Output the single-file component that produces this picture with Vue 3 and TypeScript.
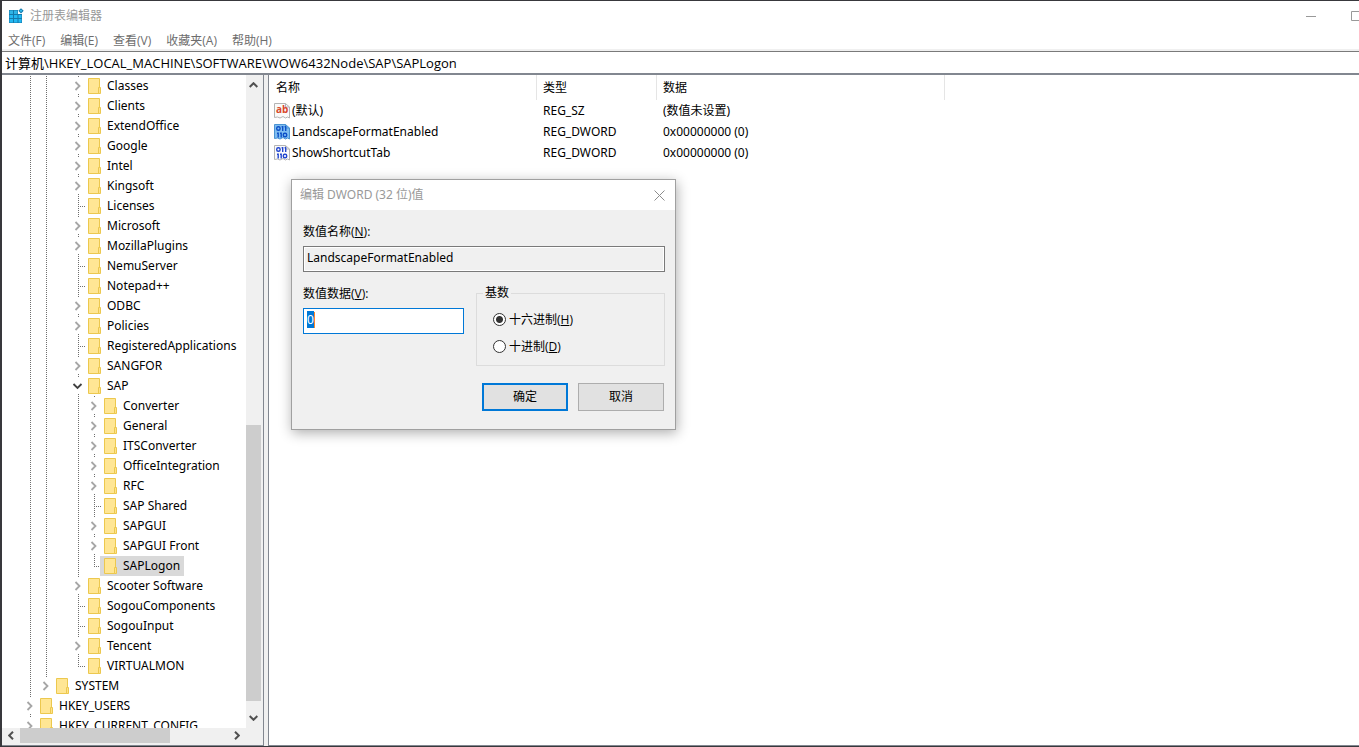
<script setup lang="ts">
import { onMounted, ref } from 'vue'

type Cell = 'none' | 'line' | 'open' | 'closed' | 'closed-last' | 'tee' | 'elbow'

interface TreeRow {
  name: string
  cells: Cell[]
  selected: boolean
}

interface RegValue {
  name: string
  type: string
  data: string
  kind: 'text' | 'binary'
  active: boolean
}

const softwareBefore: [string, Cell][] = [
  ['Classes', 'closed'],
  ['Clients', 'closed'],
  ['ExtendOffice', 'closed'],
  ['Google', 'closed'],
  ['Intel', 'closed'],
  ['Kingsoft', 'closed'],
  ['Licenses', 'tee'],
  ['Microsoft', 'closed'],
  ['MozillaPlugins', 'closed'],
  ['NemuServer', 'tee'],
  ['Notepad++', 'tee'],
  ['ODBC', 'closed'],
  ['Policies', 'closed'],
  ['RegisteredApplications', 'tee'],
  ['SANGFOR', 'closed'],
  ['SAP', 'open'],
]

const sapChildren: [string, Cell][] = [
  ['Converter', 'closed'],
  ['General', 'closed'],
  ['ITSConverter', 'closed'],
  ['OfficeIntegration', 'closed'],
  ['RFC', 'closed'],
  ['SAP Shared', 'tee'],
  ['SAPGUI', 'closed'],
  ['SAPGUI Front', 'closed'],
  ['SAPLogon', 'elbow'],
]

const softwareAfter: [string, Cell][] = [
  ['Scooter Software', 'closed'],
  ['SogouComponents', 'tee'],
  ['SogouInput', 'tee'],
  ['Tencent', 'closed'],
  ['VIRTUALMON', 'elbow'],
]

function toRows(list: [string, Cell][], parents: Cell[]): TreeRow[] {
  return list.map(([name, cell]) => ({
    name,
    cells: [...parents, cell],
    selected: name === 'SAPLogon',
  }))
}

const rows: TreeRow[] = [
  ...toRows(softwareBefore, ['line', 'line', 'none']),
  ...toRows(sapChildren, ['line', 'line', 'none', 'line']),
  ...toRows(softwareAfter, ['line', 'line', 'none']),
  ...toRows([['SYSTEM', 'closed-last']], ['line']),
  ...toRows([['HKEY_USERS', 'closed'], ['HKEY_CURRENT_CONFIG', 'closed-last']], []),
]

const values: RegValue[] = [
  { name: '(默认)', type: 'REG_SZ', data: '(数值未设置)', kind: 'text', active: false },
  { name: 'LandscapeFormatEnabled', type: 'REG_DWORD', data: '0x00000000 (0)', kind: 'binary', active: true },
  { name: 'ShowShortcutTab', type: 'REG_DWORD', data: '0x00000000 (0)', kind: 'binary', active: false },
]

const menus = ['文件(F)', '编辑(E)', '查看(V)', '收藏夹(A)', '帮助(H)']

const path = ref('计算机\\HKEY_LOCAL_MACHINE\\SOFTWARE\\WOW6432Node\\SAP\\SAPLogon')
const valueName = ref('LandscapeFormatEnabled')
const valueData = ref('0')
const base = ref<'hex' | 'dec'>('hex')
const dataInput = ref<HTMLInputElement | null>(null)

onMounted(() => {
  dataInput.value?.focus()
  dataInput.value?.select()
})
</script>

<template>
  <div class="window">
    <header class="titlebar">
      <svg class="app-icon" width="16" height="16" viewBox="0 0 16 16" aria-hidden="true">
        <path d="M1 2h9v4h4v9H1z" fill="#1579ab" />
        <path d="M1.500 2.500h3.500v3.500H1.500zM6 2.500h3.500v3.500H6z" fill="#2fb4e6" />
        <path d="M1.500 7h3.500v3H1.500zM6 7h3.500v3H6zM10.500 7h3v3h-3zM1.500 11h3.500v3.500H1.500zM6 11h3.500v3.500H6zM10.500 11h3v3.500h-3z" fill="#22b8f2" />
        <path d="M13 .2l2.700 2.600L13 5.400l-2.700-2.600z" fill="#1579ab" />
        <path d="M13 1.500l1.400 1.300L13 4.100l-1.400-1.300z" fill="#35c0f3" />
      </svg>
      <h1 class="title">注册表编辑器</h1>
      <div class="controls">
        <button type="button" aria-label="最小化">
          <svg width="11" height="11" viewBox="0 0 11 11"><path d="M0 5.500h10" stroke="#999" /></svg>
        </button>
        <button type="button" aria-label="最大化">
          <svg width="11" height="11" viewBox="0 0 11 11"><path d="M.5.500h9v9h-9z" fill="none" stroke="#999" /></svg>
        </button>
      </div>
    </header>

    <nav class="menubar">
      <button v-for="menu in menus" :key="menu" type="button">{{ menu }}</button>
    </nav>

    <div class="address">
      <input v-model="path" type="text" aria-label="地址" spellcheck="false" />
    </div>

    <main class="panes">
      <section class="tree-pane">
        <ul class="tree">
          <li v-for="row in rows" :key="row.name" class="row">
            <svg v-for="(cell, i) in row.cells" :key="i" class="cell" width="16" height="20" viewBox="0 0 16 20" aria-hidden="true">
              <g class="dots">
                <path v-if="cell === 'line' || cell === 'tee'" d="M10.500 0v20" />
                <path v-if="cell === 'elbow'" d="M10.500 0v11" />
                <path v-if="cell === 'tee' || cell === 'elbow'" d="M12 10.500h5" />
                <path v-if="cell === 'open' || cell === 'closed' || cell === 'closed-last'" d="M10.500 0v1" />
                <path v-if="cell === 'open' || cell === 'closed'" d="M10.500 18v2" />
              </g>
              <path v-if="cell === 'closed' || cell === 'closed-last'" d="M7.500 6l4 4-4 4" fill="none" stroke="#a6a6a6" stroke-width="1.800" />
              <path v-if="cell === 'open'" d="M5.500 8l4 4 4-4" fill="none" stroke="#404040" stroke-width="1.800" />
            </svg>
            <a href="#" class="label" :class="{ selected: row.selected }">
              <svg width="13" height="16" viewBox="0 0 13 16" aria-hidden="true">
                <path d="M.5.500h11v15H.5z" fill="#ffe694" stroke="#ecc84e" />
                <path d="M10.500 9.500h2v6h-2z" fill="#ffe28a" stroke="#ecc84e" />
              </svg>
              <span>{{ row.name }}</span>
            </a>
          </li>
        </ul>
        <div class="vbar">
          <button type="button" aria-label="向上滚动">
            <svg width="9" height="6" viewBox="0 0 9 6"><path d="M.7 5l3.800-3.800L8.300 5" /></svg>
          </button>
          <div class="vtrack"><div class="vthumb"></div></div>
          <button type="button" aria-label="向下滚动">
            <svg width="9" height="6" viewBox="0 0 9 6"><path d="M.7 1l3.800 3.800L8.300 1" /></svg>
          </button>
        </div>
        <div class="hbar">
          <button type="button" aria-label="向左滚动">
            <svg width="6" height="9" viewBox="0 0 6 9"><path d="M5 .7L1.200 4.500 5 8.300" /></svg>
          </button>
          <div class="htrack"><div class="hthumb"></div></div>
          <button type="button" aria-label="向右滚动">
            <svg width="6" height="9" viewBox="0 0 6 9"><path d="M1 .7l3.800 3.800L1 8.300" /></svg>
          </button>
        </div>
      </section>

      <section class="list-pane">
        <table class="values">
          <colgroup>
            <col class="c-name" />
            <col class="c-type" />
            <col class="c-data" />
            <col />
          </colgroup>
          <thead>
            <tr>
              <th scope="col">名称</th>
              <th scope="col">类型</th>
              <th scope="col">数据</th>
              <td></td>
            </tr>
          </thead>
          <tbody>
            <tr v-for="item in values" :key="item.name">
              <td>
                <div class="value-name">
                  <svg class="value-icon" width="16" height="16" viewBox="0 0 16 16" aria-hidden="true">
                    <path
                      d="M.5.500h11l4 3.500v11l-2-1-2 1-2.500-1.500-3 1.500-2.500-1-3 .5z"
                      :fill="item.active ? '#7fbdf0' : '#fafafa'"
                      :stroke="item.active ? '#4a93d2' : '#b4b4b4'"
                    />
                    <path d="M11.500.500v3.500h4" fill="none" :stroke="item.active ? '#4a93d2' : '#b4b4b4'" />
                    <text v-if="item.kind === 'text'" x="2" y="10" font-size="10" fill="#d8482c">ab</text>
                    <g v-else fill="none" :stroke="item.active ? '#0d50c8' : '#2347cf'" stroke-width="1.400">
                      <rect x="2.700" y="2.700" width="3.400" height="3.600" rx="1.500" />
                      <path d="M8.700 2v5M11.700 2v5M7.600 2.700h1M10.600 2.700h1" />
                      <path d="M4.200 8.500v5M7.200 8.500v5M3 9.200h1M6 9.200h1" />
                      <rect x="9.300" y="9.200" width="3.400" height="3.600" rx="1.500" />
                    </g>
                  </svg>
                  <span>{{ item.name }}</span>
                </div>
              </td>
              <td>{{ item.type }}</td>
              <td>{{ item.data }}</td>
              <td></td>
            </tr>
          </tbody>
        </table>
      </section>
    </main>

    <form class="dialog" role="dialog" aria-labelledby="dialog-title" @submit.prevent>
      <header class="dialog-title">
        <h2 id="dialog-title">编辑 DWORD (32 位)值</h2>
        <button type="button" aria-label="关闭">
          <svg width="11" height="11" viewBox="0 0 11 11"><path d="M.5.500l10 10M10.500.500l-10 10" stroke="#8c8c8c" /></svg>
        </button>
      </header>
      <div class="dialog-body">
        <label for="value-name">数值名称(<u>N</u>):</label>
        <input id="value-name" v-model="valueName" class="name-input" type="text" readonly />
        <div class="columns">
          <div class="data-col">
            <label for="value-data">数值数据(<u>V</u>):</label>
            <div class="data-field">
              <input id="value-data" ref="dataInput" v-model="valueData" type="text" />
            </div>
          </div>
          <fieldset>
            <legend>基数</legend>
            <label class="radio"><input v-model="base" type="radio" name="base" value="hex" /><span>十六进制(<u>H</u>)</span></label>
            <label class="radio"><input v-model="base" type="radio" name="base" value="dec" /><span>十进制(<u>D</u>)</span></label>
          </fieldset>
        </div>
        <div class="actions">
          <button type="submit" class="primary">确定</button>
          <button type="button">取消</button>
        </div>
      </div>
    </form>
  </div>
</template>

<style>
html,
body {
  background: #fff;
  overflow: hidden;
}
</style>

<style scoped>
.window {
  position: relative;
  box-sizing: border-box;
  display: flex;
  flex-direction: column;
  height: 100vh;
  overflow: hidden;
  border: solid #38383c;
  border-width: 1px 0 1px 2px;
  background: #fff;
  color: #000;
  font: 12px/20px 'Noto Sans', 'Noto Sans CJK SC', sans-serif;
}

.window *,
.window *::after {
  box-sizing: border-box;
}

button,
input {
  font: inherit;
  color: inherit;
}

button {
  padding: 0;
  border: 0;
  background: none;
}

.titlebar {
  flex: none;
  display: flex;
  align-items: center;
  height: 30px;
  padding-left: 6px;
  color: #999;
}

.title {
  flex: 1;
  margin: 0 0 0 6px;
  font-size: 12px;
  font-weight: 400;
}

.controls {
  display: flex;
  margin-right: -20px;
}

.controls button {
  display: flex;
  align-items: center;
  justify-content: center;
  width: 45px;
  height: 28px;
}

.menubar {
  flex: none;
  display: flex;
  gap: 15px;
  height: 20px;
  padding-left: 6px;
  border-bottom: 2px solid #f0f0f0;
  color: #6d6d6d;
  font-family: 'Open Sans', 'Noto Sans CJK SC', sans-serif;
}

.address {
  flex: none;
  border-top: 1px solid #7a7a7a;
  border-bottom: 2px solid #828790;
}

.address input {
  display: block;
  width: 100%;
  height: 21px;
  padding: 0 3px 1px;
  border: 0;
  outline: 0;
  font-family: 'Open Sans', 'Noto Sans CJK SC', sans-serif;
  font-size: 13px;
}

.panes {
  flex: 1;
  min-height: 0;
  display: flex;
  gap: 4px;
  background: #f0f0f0;
}

.tree-pane {
  flex: 0 0 262px;
  display: grid;
  grid-template: minmax(0, 1fr) 17px / minmax(0, 1fr) 17px;
  border-right: 1px solid #828790;
  border-bottom: 1px solid #828790;
}

.tree {
  margin: 0;
  padding: 1px 0 0 18px;
  overflow: hidden;
  background: #fff;
  list-style: none;
}

.row {
  display: flex;
  height: 20px;
  white-space: nowrap;
}

.cell {
  flex: none;
  overflow: visible;
}

.dots path {
  fill: none;
  stroke: #6e6e6e;
  stroke-dasharray: 1 1;
  shape-rendering: crispEdges;
}

.label {
  display: flex;
  align-items: center;
  gap: 6px;
  padding: 0 4px;
  color: #000;
  text-decoration: none;
}

.label.selected {
  background: #d9d9d9;
}

.vbar,
.hbar {
  display: flex;
  background: #f0f0f0;
}

.vbar {
  flex-direction: column;
  padding-right: 2px;
}

.hbar {
  padding-bottom: 2px;
}

.vbar button,
.hbar button {
  flex: none;
  display: flex;
  align-items: center;
  justify-content: center;
  width: 15px;
  height: 20px;
}

.vbar path,
.hbar path {
  fill: none;
  stroke: #505050;
  stroke-width: 2;
}

.hbar button {
  width: 18px;
  height: 15px;
}

.vtrack {
  flex: 1;
  display: flex;
  flex-direction: column;
  justify-content: flex-end;
}

.vthumb {
  height: 45%;
  margin-bottom: 7px;
  background: #cdcdcd;
}

.htrack {
  flex: 1;
}

.hthumb {
  width: 72%;
  height: 100%;
  background: #cdcdcd;
}

.list-pane {
  flex: 1;
  min-width: 0;
  overflow: hidden;
  border-left: 1px solid #828790;
  border-bottom: 1px solid #828790;
  background: #fff;
}

.values {
  width: 100%;
  border-collapse: separate;
  border-spacing: 0;
  table-layout: fixed;
}

.c-name {
  width: 268px;
}

.c-type {
  width: 120px;
}

.c-data {
  width: 288px;
}

.values th {
  height: 25px;
  padding: 0 6px;
  border-right: 1px solid #e5e5e5;
  font-weight: 400;
  text-align: left;
}

.values th:first-child {
  padding-left: 7px;
}

.values td {
  height: 21px;
  padding: 0 6px;
  white-space: nowrap;
}

.value-name {
  display: flex;
  align-items: center;
  gap: 2px;
  margin-left: -1px;
}

.value-icon text {
  font-family: 'Open Sans', sans-serif;
  font-weight: 700;
}

.dialog {
  position: absolute;
  top: 178px;
  left: 289px;
  width: 385px;
  border: 1px solid #a0a0a0;
  background: #f0f0f0;
  box-shadow: 1px 3px 12px rgba(0, 0, 0, 0.32);
}

.dialog-title {
  display: flex;
  align-items: center;
  justify-content: space-between;
  height: 30px;
  padding: 0 10px 0 8px;
  background: #fff;
  color: #999;
}

.dialog-title h2 {
  margin: 0;
  font-size: 12px;
  font-weight: 400;
}

.dialog-title button {
  display: flex;
}

.dialog-body {
  padding: 12px 10px 18px 11px;
  font-family: 'Open Sans', 'Noto Sans CJK SC', sans-serif;
}

.dialog-body label {
  display: block;
  height: 20px;
}

.dialog-body input[type='text'] {
  display: block;
  width: 100%;
  height: 26px;
  margin-top: 4px;
  padding: 0 3px 3px;
  border: 1px solid #7a7a7a;
  outline: 0;
  background: #f0f0f0;
  box-shadow: inset 0 0 0 1px #fff;
  font-family: 'Noto Sans', sans-serif;
}

.columns {
  display: flex;
  gap: 12px;
  margin-top: 12px;
}

.data-col {
  flex: 1;
}

.data-field {
  position: relative;
}

.data-field::after {
  position: absolute;
  top: 4px;
  left: 11px;
  width: 1px;
  height: 16px;
  background: #ff8728;
  content: '';
}

.dialog-body .data-field input {
  border-color: #0078d7;
  background: #fff;
}

.data-field input::selection {
  background: #0078d7;
  color: #fff;
}

fieldset {
  width: 189px;
  height: 82px;
  margin: 0;
  padding: 4px 16px 0;
  border: 1px solid #dcdcdc;
}

legend {
  height: 18px;
  margin-left: -10px;
  padding: 0 2px;
  line-height: 18px;
}

.dialog-body .radio {
  display: flex;
  align-items: center;
  gap: 3px;
  height: 27px;
}

.radio input {
  appearance: none;
  width: 13px;
  height: 13px;
  margin: 0;
  border: 1px solid #333;
  border-radius: 50%;
  outline: 0;
  background: #fff;
}

.radio input:checked {
  background: radial-gradient(circle, #333 0 3px, #fff 4px);
}

.actions {
  display: flex;
  justify-content: flex-end;
  gap: 10px;
  margin-top: 17px;
  padding-right: 1px;
}

.actions button {
  width: 86px;
  height: 28px;
  border: 1px solid #adadad;
  background: #e1e1e1;
}

.actions .primary {
  border: 2px solid #0078d7;
}
</style>
